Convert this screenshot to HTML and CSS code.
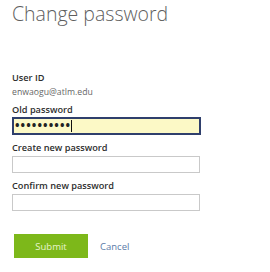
FILE: index.html
```html
<!DOCTYPE html>
<html>
<head>
<meta charset="utf-8">
<link rel="stylesheet" href="styles.css">
</head>
<body>
<div class="page">
  <h1 class="title">Change password</h1>
  <div class="group first">
    <div class="label">User ID</div>
    <div class="value">enwaogu@atlm.edu</div>
  </div>
  <div class="group">
    <div class="label">Old password</div>
    <div class="field focused"><span class="dots">••••••••••</span><span class="caret"></span></div>
  </div>
  <div class="group">
    <div class="label">Create new password</div>
    <div class="field"></div>
  </div>
  <div class="group">
    <div class="label">Confirm new password</div>
    <div class="field"></div>
  </div>
  <div class="actions">
    <button class="submit">Submit</button>
    <a class="cancel">Cancel</a>
  </div>
</div>
</body>
</html>
```
FILE: styles.css
```css
html, body {
  margin: 0;
  padding: 0;
  background: #fff;
}
.page {
  padding-left: 12px;
  font-family: "Open Sans", "Liberation Sans", sans-serif;
}
.title {
  margin: 0;
  font-size: 19.5px;
  line-height: 27px;
  font-weight: 300;
  color: #5e5e5e;
}
.group {
  margin-top: 6px;
}
.group.first {
  margin-top: 44px;
}
.label {
  font-size: 9.2px;
  line-height: 14px;
  font-weight: 600;
  color: #2e2e2e;
}
.value {
  font-size: 8.7px;
  line-height: 14px;
  color: #666;
  margin-bottom: -2px;
}
.field {
  box-sizing: border-box;
  width: 188px;
  height: 17px;
  margin-top: 1px;
  border: 1px solid #c9c9c9;
  background: #fff;
  display: flex;
  align-items: center;
}
.field.focused {
  margin-top: 0;
  width: 189px;
  height: 18px;
  border: 2px solid #2f3f6c;
  background: #fcf9c6;
  padding-left: 1px;
}
.dots {
  font-size: 12px;
  line-height: 12px;
  letter-spacing: 1.1px;
  color: #222;
  font-weight: 700;
}
.caret {
  width: 1px;
  height: 12px;
  background: #111;
}
.actions {
  margin-top: 23px;
  padding-left: 2px;
  display: flex;
  align-items: center;
  gap: 12px;
}
.submit {
  width: 74px;
  height: 24px;
  border: none;
  background: #7db81a;
  color: #e8f5d0;
  font-family: "Open Sans", "Liberation Sans", sans-serif;
  font-size: 9.5px;
  padding: 0;
}
.cancel {
  font-size: 9.5px;
  color: #5a7aa8;
}
```
